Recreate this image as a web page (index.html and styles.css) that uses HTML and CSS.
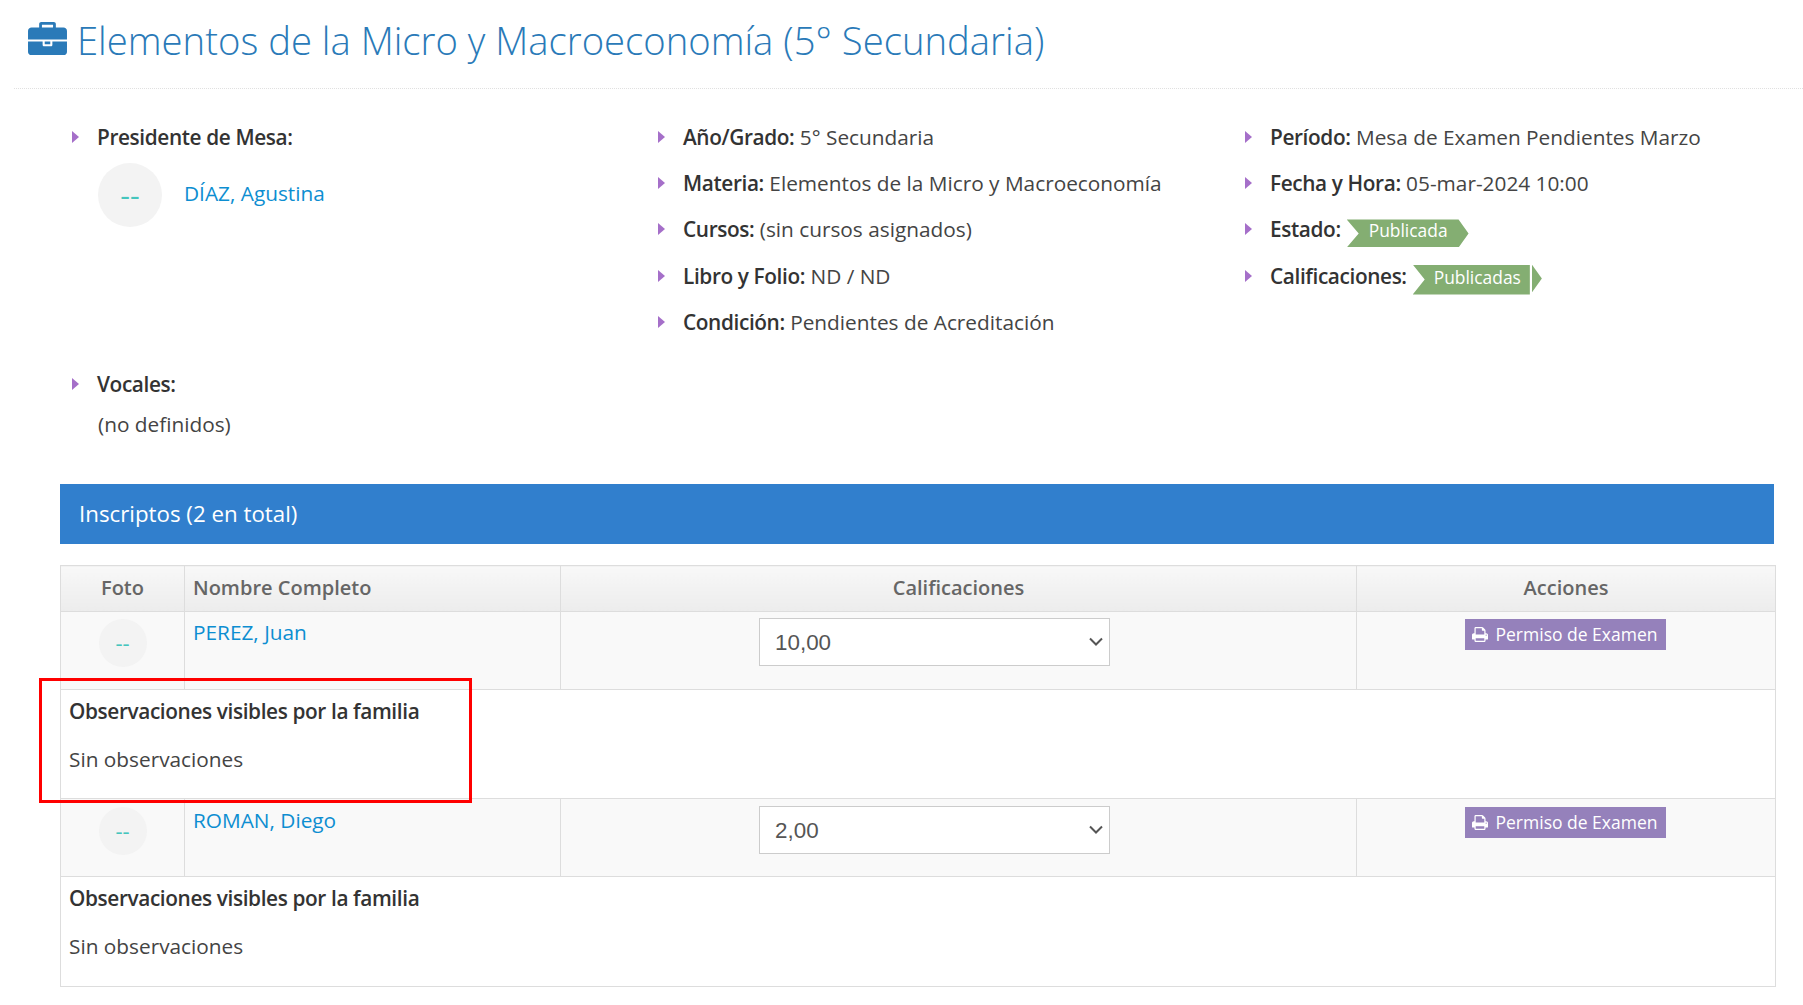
FILE: index.html
```html
<!DOCTYPE html>
<html lang="es">
<head>
<meta charset="utf-8">
<title>Mesa de examen</title>
<link rel="stylesheet" href="styles.css">
</head>
<body>
<header class="page-title">
  <svg class="title-icon" viewBox="0 0 1792 1536" aria-hidden="true"><path d="M640 256h512v-128h-512v128zm1152 640v480q0 66-47 113t-113 47h-1472q-66 0-113-47t-47-113v-480h672v160q0 26 19 45t45 19h320q26 0 45-19t19-45v-160h672zm-768 0v128h-256v-128h256zm768-480v384h-1792v-384q0-66 47-113t113-47h352v-160q0-40 28-68t68-28h576q40 0 68 28t28 68v160h352q66 0 113 47t47 113z"/></svg>
  <h1>Elementos de la Micro y Macroeconomía (5° Secundaria)</h1>
</header>
<main class="content">
  <section class="info-grid">
    <div class="info-col">
      <div class="item"><b>Presidente de Mesa:</b></div>
      <div class="person"><span class="avatar avatar-lg">--</span><a class="person-link" href="#">DÍAZ, Agustina</a></div>
    </div>
    <div class="info-col">
      <div class="item"><b>Año/Grado:</b> 5° Secundaria</div>
      <div class="item"><b>Materia:</b> Elementos de la Micro y Macroeconomía</div>
      <div class="item"><b>Cursos:</b> (sin cursos asignados)</div>
      <div class="item"><b>Libro y Folio:</b> ND / ND</div>
      <div class="item"><b>Condición:</b> Pendientes de Acreditación</div>
    </div>
    <div class="info-col">
      <div class="item"><b>Período:</b> Mesa de Examen Pendientes Marzo</div>
      <div class="item"><b>Fecha y Hora:</b> 05-mar-2024 10:00</div>
      <div class="item"><b>Estado:</b><span class="tag">Publicada</span></div>
      <div class="item"><b>Calificaciones:</b><span class="tag tag-split"><span class="tag-body">Publicadas</span><span class="tag-tip"></span></span></div>
    </div>
  </section>
  <section class="vocales">
    <div class="item"><b>Vocales:</b></div>
    <p class="none">(no definidos)</p>
  </section>
  <h2 class="bar">Inscriptos (2 en total)</h2>
  <table class="grid">
    <colgroup><col class="c-foto"><col class="c-name"><col class="c-cal"><col class="c-acc"></colgroup>
    <thead>
      <tr><th>Foto</th><th class="left">Nombre Completo</th><th>Calificaciones</th><th>Acciones</th></tr>
    </thead>
    <tbody>
      <tr class="student">
        <td class="center"><span class="avatar avatar-sm">--</span></td>
        <td><a class="name" href="#">PEREZ, Juan</a></td>
        <td><div class="grade-wrap"><select class="grade"><option>10,00</option></select><svg class="chevron" viewBox="0 0 14 9" aria-hidden="true"><path d="M1 1.500l6 6 6-6"/></svg></div></td>
        <td class="center"><a class="btn" href="#"><svg viewBox="64 128 1664 1536" aria-hidden="true"><path d="M448 1536h896v-256h-896v256zm0-640h896v-384h-160q-40 0-68-28t-28-68v-160h-640v640zm1152 64q0-26-19-45t-45-19-45 19-19 45 19 45 45 19 45-19 19-45zm128 0v416q0 13-9.500 22.500t-22.500 9.500h-224v160q0 40-28 68t-68 28h-960q-40 0-68-28t-28-68v-160h-224q-13 0-22.500-9.500t-9.500-22.500v-416q0-79 56.500-135.500t135.500-56.500h64v-544q0-40 28-68t68-28h672q40 0 88 20t76 48l152 152q28 28 48 76t20 88v256h64q79 0 135.500 56.500t56.500 135.500z"/></svg>Permiso de Examen</a></td>
      </tr>
      <tr class="obs">
        <td colspan="4"><b>Observaciones visibles por la familia</b><p>Sin observaciones</p></td>
      </tr>
      <tr class="student student-b">
        <td class="center"><span class="avatar avatar-sm">--</span></td>
        <td><a class="name" href="#">ROMAN, Diego</a></td>
        <td><div class="grade-wrap"><select class="grade"><option>2,00</option></select><svg class="chevron" viewBox="0 0 14 9" aria-hidden="true"><path d="M1 1.500l6 6 6-6"/></svg></div></td>
        <td class="center"><a class="btn" href="#"><svg viewBox="64 128 1664 1536" aria-hidden="true"><path d="M448 1536h896v-256h-896v256zm0-640h896v-384h-160q-40 0-68-28t-28-68v-160h-640v640zm1152 64q0-26-19-45t-45-19-45 19-19 45 19 45 45 19 45-19 19-45zm128 0v416q0 13-9.500 22.500t-22.500 9.500h-224v160q0 40-28 68t-68 28h-960q-40 0-68-28t-28-68v-160h-224q-13 0-22.500-9.500t-9.500-22.500v-416q0-79 56.500-135.500t135.500-56.500h64v-544q0-40 28-68t68-28h672q40 0 88 20t76 48l152 152q28 28 48 76t20 88v256h64q79 0 135.500 56.500t56.500 135.500z"/></svg>Permiso de Examen</a></td>
      </tr>
      <tr class="obs obs-last">
        <td colspan="4"><b>Observaciones visibles por la familia</b><p>Sin observaciones</p></td>
      </tr>
    </tbody>
  </table>
</main>
<div class="highlight"></div>
</body>
</html>
```
FILE: styles.css
```css
* { box-sizing: border-box; }
html, body { margin: 0; padding: 0; background: #fff; }
body {
  font-family: "Open Sans", "Noto Sans", sans-serif;
  font-size: 20.8px;
  line-height: 28.6px;
  color: #444;
  height: 1005px;
  overflow: hidden;
  position: relative;
}
a { color: #0d8ed1; text-decoration: none; }
b { font-weight: 600; color: #333; letter-spacing: -0.38px; }

.page-title {
  display: flex;
  align-items: flex-start;
  gap: 10px;
  height: 89px;
  margin-left: 14px;
  padding: 15px 0 0 14px;
  border-bottom: 1px dotted #e0e0e0;
}
.title-icon { width: 39px; height: 33.4px; margin-top: 7px; fill: #2a7ab8; flex: none; }
.page-title h1 {
  margin: 0;
  font-size: 38.25px;
  font-weight: 300;
  line-height: 50px;
  color: #2a7ab8;
}

.content { padding: 25px 29px 0 60px; }
.info-grid { display: grid; grid-template-columns: 586px 587px 1fr; padding-left: 12px; }

.item {
  position: relative;
  height: 46.2px;
  line-height: 46px;
  padding-left: 25px;
  white-space: nowrap;
}
.item::before {
  content: "";
  position: absolute;
  left: 0;
  top: 17px;
  border-left: 7px solid #a56fc9;
  border-top: 6px solid transparent;
  border-bottom: 6px solid transparent;
}

.person { display: flex; align-items: center; gap: 22px; margin: 3px 0 0 26px; }
.person-link { margin-top: -3px; }
.avatar {
  display: inline-flex;
  align-items: center;
  justify-content: center;
  width: 48px;
  height: 48px;
  border-radius: 50%;
  background: #f3f3f3;
  color: #45c5bd;
  font-size: 22px;
}
.avatar-sm { margin-top: -1px; padding-bottom: 2px; }
.avatar-lg { width: 64px; height: 64px; font-size: 30px; }

.tag {
  display: inline-block;
  vertical-align: 0;
  margin-left: 6px;
  height: 28px;
  line-height: 22px;
  padding: 0 21px 0 22px;
  font-size: 17.4px;
  color: #fff;
  background: #84ae72;
  clip-path: polygon(0 0, calc(100% - 10px) 0, 100% 50%, calc(100% - 10px) 100%, 0 100%, 12px 50%);
}
.tag-split { padding: 0; background: none; clip-path: none; display: inline-flex; vertical-align: 0; height: 30px; }
.tag-body {
  height: 30px;
  line-height: 25px;
  padding: 0 9px 0 21px;
  background: #84ae72;
  clip-path: polygon(0 0, 100% 0, 100% 100%, 0 100%, 12px 50%);
}
.tag-tip {
  width: 10px;
  height: 28px;
  margin-left: 2px;
  background: #84ae72;
  clip-path: polygon(0 0, 100% 50%, 0 100%);
}

.vocales { margin-top: 16px; margin-left: 12px; }
.none { margin: 2px 0 0 26px; line-height: 30px; }

.bar {
  margin: 45px 0 0;
  height: 60px;
  line-height: 60px;
  padding-left: 19px;
  background: #317fcd;
  color: #fff;
  font-size: 22.3px;
  font-weight: 400;
}

.grid {
  width: 1715px;
  margin-top: 21px;
  border-collapse: collapse;
  table-layout: fixed;
}
.c-foto { width: 124px; }
.c-name { width: 376px; }
.c-cal { width: 796px; }
.c-acc { width: 419px; }
.grid th, .grid td { border: 1px solid #ddd; padding: 8px; vertical-align: top; }
.grid th {
  height: 46px;
  padding: 0 8px;
  vertical-align: middle;
  font-weight: 600;
  font-size: 20px;
  color: #666;
  background: linear-gradient(#f8f8f8, #ececec);
}
.grid th.left { text-align: left; }
.center { text-align: center; }
.student td { background: #f9f9f9; height: 78px; }
.grid .student-b td { padding-top: 9px; }
.name { display: block; margin-top: -2px; }
.obs td { height: 109px; background: #fff; padding-top: 7px; }
.obs-last td { height: 110px; }
.obs p { margin: 19px 0 0; }

.grade-wrap { position: relative; width: 351px; margin: -2px 0 0 190px; }
.grade {
  display: block;
  width: 100%;
  height: 48px;
  padding-left: 15px;
  appearance: none;
  font-family: "Liberation Sans", Arial, sans-serif;
  font-size: 22.4px;
  color: #555;
  background: #fff;
  border: 1px solid #ccc;
  border-radius: 0;
}
.chevron {
  position: absolute;
  right: 7px;
  top: 19px;
  width: 14px;
  height: 9px;
  fill: none;
  stroke: #555;
  stroke-width: 2;
  pointer-events: none;
}
.btn {
  display: inline-flex;
  align-items: center;
  gap: 8px;
  height: 31px;
  margin: -1px 2px 0 0;
  padding: 0 8px 0 7px;
  background: #9581bb;
  color: #fff;
  font-size: 17.5px;
  line-height: 29px;
}
.btn svg { width: 16px; height: 15px; fill: #fff; }

.highlight {
  position: absolute;
  left: 39px;
  top: 678px;
  width: 433px;
  height: 125px;
  border: 3px solid #f00;
  pointer-events: none;
}
```
